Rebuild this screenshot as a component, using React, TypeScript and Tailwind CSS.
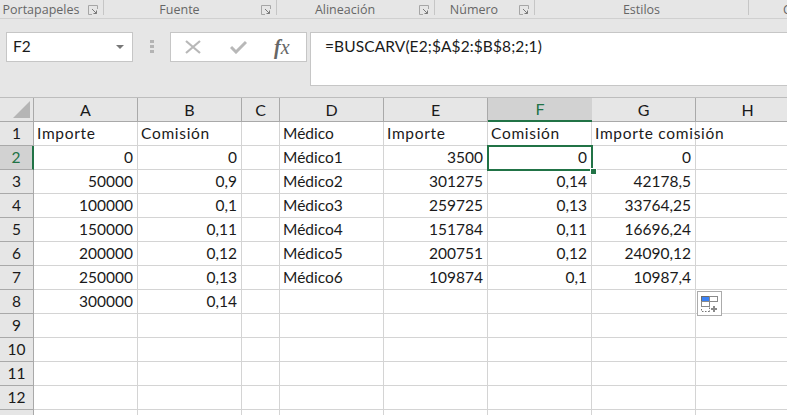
import React from "react";

const columns = ["A", "B", "C", "D", "E", "F", "G", "H"];

const rows: Record<string, string>[] = [
  { A: "Importe", B: "Comisión", D: "Médico", E: "Importe", F: "Comisión", G: "Importe comisión" },
  { A: "0", B: "0", D: "Médico1", E: "3500", F: "0", G: "0" },
  { A: "50000", B: "0,9", D: "Médico2", E: "301275", F: "0,14", G: "42178,5" },
  { A: "100000", B: "0,1", D: "Médico3", E: "259725", F: "0,13", G: "33764,25" },
  { A: "150000", B: "0,11", D: "Médico4", E: "151784", F: "0,11", G: "16696,24" },
  { A: "200000", B: "0,12", D: "Médico5", E: "200751", F: "0,12", G: "24090,12" },
  { A: "250000", B: "0,13", D: "Médico6", E: "109874", F: "0,1", G: "10987,4" },
  { A: "300000", B: "0,14" },
  {},
  {},
  {},
  {},
  {},
];

const ribbonGroups = [
  { label: "Portapapeles", width: "w-[104px]", launcher: true },
  { label: "Fuente", width: "w-[173px]", launcher: true },
  { label: "Alineación", width: "w-[158px]", launcher: true },
  { label: "Número", width: "w-[100px]", launcher: true },
  { label: "Estilos", width: "w-[214px]", launcher: false },
];

const Launcher = () => (
  <svg width="10" height="10" viewBox="0 0 10 10" className="absolute right-[5px] top-[5px]" fill="none">
    <path d="M9.5 4V.5H.5v9H4" stroke="#a6a6a6" />
    <path d="M4 4l4.5 4.5M8.5 5.5v3h-3" stroke="#7a7a7a" />
  </svg>
);

const PasteOptions = () => (
  <div className="absolute left-[697px] top-[291px] w-[25px] h-[25px] bg-white border border-[#ababab] flex items-center justify-center">
    <svg width="17" height="16" viewBox="0 0 17 16" fill="none">
      <rect x="0.5" y="0.5" width="8" height="5" fill="#3b82f6" stroke="#6b6b6b" />
      <rect x="8.5" y="0.5" width="8" height="5" fill="#fff" stroke="#8a8a8a" />
      <rect x="0.5" y="5.5" width="8" height="5" fill="#fff" stroke="#8a8a8a" />
      <path d="M.5 13v2.5h8" stroke="#777" strokeDasharray="1.5 1.5" />
      <path d="M8.5 11.5v4" stroke="#777" strokeDasharray="1.5 1.5" />
      <path d="M13 10v6M10 13h6" stroke="#8a8a8a" strokeWidth="2" />
    </svg>
  </div>
);

export default function App() {
  return (
    <div className="relative w-[787px] h-[415px] overflow-hidden bg-[#e6e6e6] font-['Lato',sans-serif] text-[#1a1a1a]">
      <div className="flex h-[19px] border-b border-[#d0d0d0] font-['Open_Sans',sans-serif] text-[12.5px] text-[#666]">
        {ribbonGroups.map((g) => (
          <div key={g.label} className={`relative ${g.width} shrink-0 h-[15px] border-r border-[#c6c6c6] flex justify-center`}>
            <span className={g.launcher ? "mr-[21px] leading-[19px]" : "leading-[19px]"}>{g.label}</span>
            {g.launcher && <Launcher />}
          </div>
        ))}
        <div className="flex-1 overflow-hidden pl-[34px] leading-[19px]">Celdas</div>
      </div>

      <div className="flex h-[79px] border-b border-[#bdbdbd] pt-[13px] pl-[6px] items-start">
        <div className="w-[127px] h-[30px] shrink-0 bg-white border border-[#c6c6c6] flex items-center justify-between pl-[6px] pr-[8px] text-[15.5px]">
          <span>F2</span>
          <svg width="8" height="4" viewBox="0 0 8 4"><path d="M0 0h8L4 4z" fill="#777" /></svg>
        </div>
        <div className="w-[37px] h-[30px] shrink-0 flex items-center justify-center">
          <svg width="4" height="14" viewBox="0 0 4 14" fill="#b4b4b4">
            <rect width="4" height="3" />
            <rect y="5" width="4" height="3" />
            <rect y="10" width="4" height="3" />
          </svg>
        </div>
        <div className="w-[137px] h-[30px] shrink-0 bg-white border border-[#c6c6c6] flex items-center pl-[14px]">
          <svg width="16" height="14" viewBox="0 0 16 14" fill="none" stroke="#b8b8b8" strokeWidth="2.2">
            <path d="M1 1l14 12M15 1L1 13" />
          </svg>
          <svg width="17" height="14" viewBox="0 0 17 14" fill="none" stroke="#b8b8b8" strokeWidth="3" className="ml-[29px]">
            <path d="M1 7l5 5 10-10" />
          </svg>
          <span className="ml-[27px] font-['Liberation_Serif',serif] italic text-[#666] text-[20px] leading-none"><span className="font-bold">f</span>x</span>
        </div>
        <div className="ml-[3px] w-[480px] h-[54px] shrink-0 bg-white border border-[#c6c6c6] pl-[14px] pt-[3px] text-[15.5px] leading-[20px] tracking-[0.1px] whitespace-nowrap">
          =BUSCARV(E2;$A$2:$B$8;2;1)
        </div>
      </div>

      <div className="grid grid-cols-[34px_104px_104px_38px_104px_104px_104px_104px_104px] auto-rows-[24px] bg-white text-[15.5px]">
        <div className="bg-[#e6e6e6] border-r border-b border-[#a9a9a9] flex items-end justify-end pr-[3px] pb-[3px]">
          <svg width="17" height="17" viewBox="0 0 17 17"><path d="M17 0v17H0z" fill="#b5b5b5" /></svg>
        </div>
        {columns.map((c) => (
          <div
            key={c}
            className={
              c === "F"
                ? "bg-[#d2d2d2] border-b-2 border-[#217346] text-[#217346] text-[16px] flex items-center justify-center"
                : "bg-[#e6e6e6] border-r border-b border-[#a9a9a9] text-[16px] flex items-center justify-center"
            }
          >
            {c}
          </div>
        ))}
        {rows.map((row, i) => (
          <React.Fragment key={i}>
            <div
              className={
                i === 1
                  ? "bg-[#d2d2d2] border-r-2 border-b border-r-[#217346] border-b-[#a9a9a9] text-[#217346] flex items-center justify-center"
                  : "bg-[#e6e6e6] border-r border-b border-[#a9a9a9] flex items-center justify-center"
              }
            >
              {i < 12 ? i + 1 : ""}
            </div>
            {columns.map((c) => {
              const text = row[c] ?? "";
              const isNumber = /^[0-9,]+$/.test(text);
              const isHeading = i === 0 && text !== "Médico";
              return (
                <div
                  key={c}
                  className={
                    isNumber
                      ? "border-r border-b border-[#d4d4d4] flex items-center justify-end pr-[4px] whitespace-nowrap"
                      : isHeading
                        ? "border-r border-b border-[#d4d4d4] flex items-center pl-[3px] whitespace-nowrap tracking-[0.7px]"
                        : "border-r border-b border-[#d4d4d4] flex items-center pl-[3px] whitespace-nowrap"
                  }
                >
                  {text}
                </div>
              );
            })}
          </React.Fragment>
        ))}
      </div>

      {/* selected cell F2 */}
      <div className="absolute left-[487px] top-[145px] w-[106px] h-[26px] border-2 border-[#217346]" />
      <div className="absolute left-[590px] top-[168px] w-[5px] h-[5px] bg-[#217346] border border-white box-content" />
      <PasteOptions />
    </div>
  );
}
